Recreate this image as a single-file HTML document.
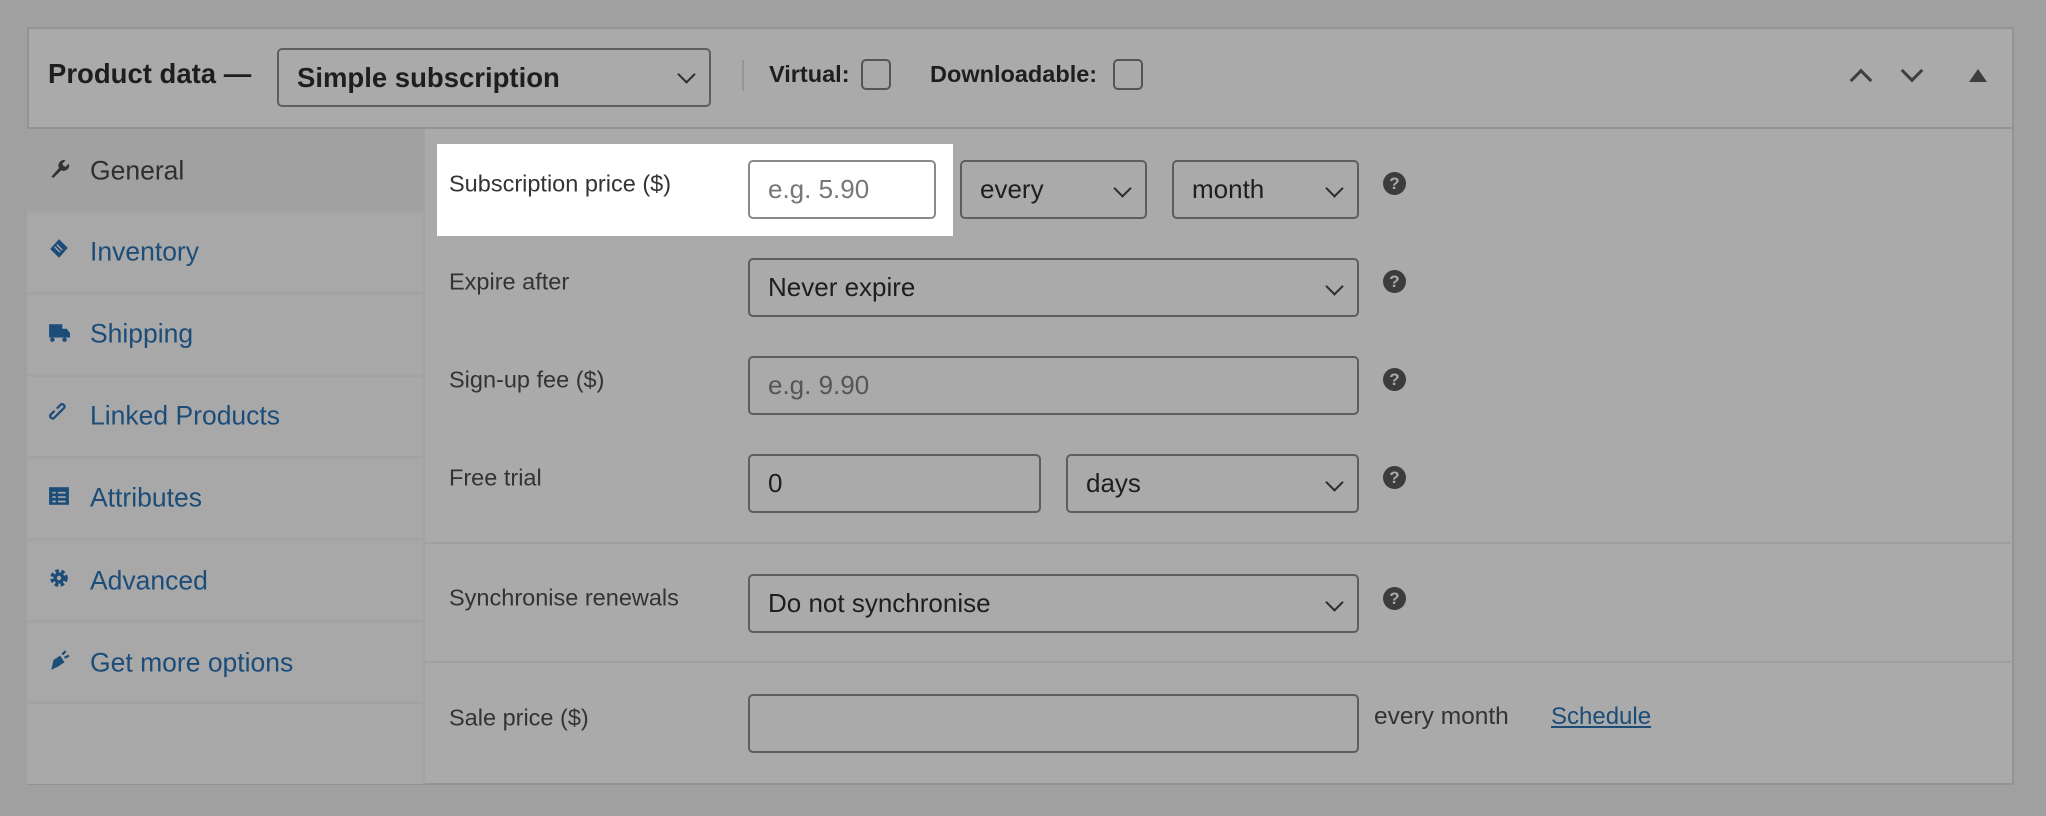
<!DOCTYPE html>
<html><head><meta charset="utf-8"><style>
*{box-sizing:border-box;margin:0;padding:0}
body{width:2046px;height:816px;background:#a0a0a0;font-family:"Liberation Sans",sans-serif;position:relative;overflow:hidden;color:#2f2f2f}
.a{position:absolute}
.panel{left:27px;top:27px;width:1987px;height:758px;background:#aaaaaa;border:2px solid #939393}
.box{position:absolute;border:2px solid #5e5e5e;border-radius:5px;height:59px;font-size:26px;padding-left:18px;line-height:55px;color:#1e1e1e}
.ph{color:#555}
.chev{position:absolute;right:16px;top:20px;width:13px;height:13px;border-right:2.5px solid #2e2e2e;border-bottom:2.5px solid #2e2e2e;transform:rotate(45deg)}
.lbl{position:absolute;left:449px;font-size:23.5px;color:#333;transform:translateY(-50%)}
.tab{position:absolute;left:90px;font-size:26.5px;color:#1c4c78;transform:translateY(-50%)}
.sep{position:absolute;left:27px;width:396px;height:3px;background:#a3a3a3}
.help{position:absolute;left:1383px;width:23px;height:23px;border-radius:50%;background:#3c3c3c;color:#aaa;font-size:17px;font-weight:bold;text-align:center;line-height:23px}
.ic{position:absolute;left:48px;width:22px;height:22px;transform:translateY(-50%)}
</style></head><body>
<div class="a panel"></div>
<div class="a" style="left:48px;top:58px;font-size:27.5px;font-weight:bold;color:#1e1e1e">Product data —</div>
<div class="box" style="left:277px;top:48px;width:434px;height:59px;font-size:27.5px;font-weight:bold;color:#1e1e1e">Simple subscription<div class="chev" style="top:18px"></div></div>
<div class="a" style="left:742px;top:60px;width:2px;height:31px;background:#959595"></div>
<div class="a" style="left:769px;top:61px;font-size:23.5px;font-weight:bold;color:#1e1e1e">Virtual:</div>
<div class="a" style="left:861px;top:59px;width:30px;height:31px;border:2px solid #555;border-radius:5px"></div>
<div class="a" style="left:930px;top:61px;font-size:23.5px;font-weight:bold;color:#1e1e1e">Downloadable:</div>
<div class="a" style="left:1113px;top:59px;width:30px;height:31px;border:2px solid #555;border-radius:5px"></div>
<div class="a" style="left:1853px;top:72px;width:16px;height:16px;border-left:3px solid #3e3e3e;border-top:3px solid #3e3e3e;transform:rotate(45deg)"></div>
<div class="a" style="left:1904px;top:63px;width:16px;height:16px;border-right:3px solid #3e3e3e;border-bottom:3px solid #3e3e3e;transform:rotate(45deg)"></div>
<div class="a" style="left:1969px;top:69px;width:0;height:0;border-left:9px solid transparent;border-right:9px solid transparent;border-bottom:13px solid #3e3e3e"></div>
<div class="a" style="left:27px;top:127px;width:1987px;height:2px;background:#939393"></div>
<div class="a" style="left:27px;top:129px;width:396px;height:655px;background:#a8a8a8"></div>
<div class="a" style="left:423px;top:129px;width:2px;height:655px;background:#a3a3a3"></div>
<div class="a" style="left:27px;top:129px;width:396px;height:82px;background:#a1a1a1"></div>
<div class="sep" style="top:210px"></div><div class="sep" style="top:292px"></div><div class="sep" style="top:374px"></div><div class="sep" style="top:456px"></div><div class="sep" style="top:538px"></div><div class="sep" style="top:620px"></div><div class="sep" style="top:701px"></div>
<svg class="ic" style="top:168px" viewBox="0 0 20 20"><path d="M3 18l7-8a5 5 0 0 1 6-7l-3 3 1 2 2 1 3-3a5 5 0 0 1-7 6l-7 7z" fill="#333"/></svg>
<div class="tab" style="top:171px;color:#2f2f2f">General</div>
<svg class="ic" style="top:249px" viewBox="0 0 20 20"><path d="M10 1l8 8-8 9-8-8z" fill="#1c4c78"/><path d="M6 8l5 5M8 6l5 5" stroke="#a8a8a8" stroke-width="1.2"/></svg>
<div class="tab" style="top:252px">Inventory</div>
<svg class="ic" style="top:332px" viewBox="0 0 20 20"><path d="M1 3h12v12H1zM13 7h4l3 4v4h-7z" fill="#1c4c78"/><circle cx="4" cy="17" r="2" fill="#1c4c78"/><circle cx="15" cy="17" r="2" fill="#1c4c78"/></svg>
<div class="tab" style="top:334px">Shipping</div>
<svg class="ic" style="top:413px" viewBox="0 0 20 20"><path d="M8 12l-3 3a2.5 2.5 0 0 1-3-3l4-4M12 8l3-3a2.5 2.5 0 0 0-3-3L8 6M7 13l6-6" stroke="#1c4c78" stroke-width="2" fill="none"/></svg>
<div class="tab" style="top:416px">Linked Products</div>
<svg class="ic" style="top:496px" viewBox="0 0 20 20"><rect x="1" y="2" width="18" height="16" fill="#1c4c78"/><path d="M4 7h3M9 7h7M4 11h3M9 11h7M4 15h3M9 15h7" stroke="#a8a8a8" stroke-width="1.5"/></svg>
<div class="tab" style="top:498px">Attributes</div>
<svg class="ic" style="top:578px" viewBox="0 0 20 20"><circle cx="10" cy="10" r="6" fill="none" stroke="#1c4c78" stroke-width="4" stroke-dasharray="3 2"/><circle cx="10" cy="10" r="5" fill="#1c4c78"/><circle cx="10" cy="10" r="2" fill="#a8a8a8"/></svg>
<div class="tab" style="top:581px">Advanced</div>
<svg class="ic" style="top:660px" viewBox="0 0 20 20"><path d="M3 19l2-9 6-4 4 6-6 4z" fill="#1c4c78"/><path d="M13 5l3-3M15 8l4-2" stroke="#1c4c78" stroke-width="2"/></svg>
<div class="tab" style="top:663px">Get more options</div>
<div class="a" style="left:437px;top:144px;width:516px;height:92px;background:#fff"></div>
<div class="lbl" style="top:184px">Subscription price ($)</div>
<div class="box" style="left:748px;top:160px;width:188px;background:#fff;border-color:#8a8a8a"><span class="ph" style="color:#777">e.g. 5.90</span></div>
<div class="box" style="left:960px;top:160px;width:187px">every<div class="chev"></div></div>
<div class="box" style="left:1172px;top:160px;width:187px">month<div class="chev"></div></div>
<div class="help" style="top:172px">?</div>
<div class="lbl" style="top:282px">Expire after</div>
<div class="box" style="left:748px;top:258px;width:611px">Never expire<div class="chev"></div></div>
<div class="help" style="top:270px">?</div>
<div class="lbl" style="top:380px">Sign-up fee ($)</div>
<div class="box" style="left:748px;top:356px;width:611px"><span class="ph">e.g. 9.90</span></div>
<div class="help" style="top:368px">?</div>
<div class="lbl" style="top:478px">Free trial</div>
<div class="box" style="left:748px;top:454px;width:293px">0</div>
<div class="box" style="left:1066px;top:454px;width:293px">days<div class="chev"></div></div>
<div class="help" style="top:466px">?</div>
<div class="a" style="left:425px;top:542px;width:1588px;height:2px;background:#a0a0a0"></div>
<div class="lbl" style="top:598px">Synchronise renewals</div>
<div class="box" style="left:748px;top:574px;width:611px">Do not synchronise<div class="chev"></div></div>
<div class="help" style="top:587px">?</div>
<div class="a" style="left:425px;top:661px;width:1588px;height:2px;background:#a0a0a0"></div>
<div class="lbl" style="top:718px">Sale price ($)</div>
<div class="box" style="left:748px;top:694px;width:611px"></div>
<div class="a" style="left:1374px;top:703px;font-size:24.5px;color:#333">every month</div>
<div class="a" style="left:1551px;top:703px;font-size:24px;color:#1c4c78;text-decoration:underline">Schedule</div>
</body></html>
